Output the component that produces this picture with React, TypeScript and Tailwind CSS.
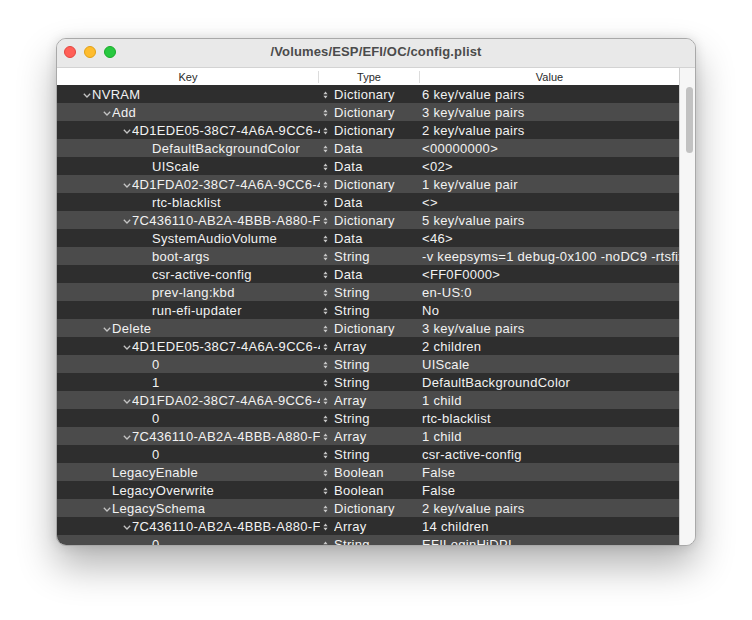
import React from 'react';

interface Row {
  key: string;
  level: number;
  open?: boolean;
  type: string;
  value: string;
}

const rows: Row[] = [
  { key: 'NVRAM', level: 0, open: true, type: 'Dictionary', value: '6 key/value pairs' },
  { key: 'Add', level: 1, open: true, type: 'Dictionary', value: '3 key/value pairs' },
  { key: '4D1EDE05-38C7-4A6A-9CC6-4BCCA8B38C14', level: 2, open: true, type: 'Dictionary', value: '2 key/value pairs' },
  { key: 'DefaultBackgroundColor', level: 3, type: 'Data', value: '<00000000>' },
  { key: 'UIScale', level: 3, type: 'Data', value: '<02>' },
  { key: '4D1FDA02-38C7-4A6A-9CC6-4BCCA8B30102', level: 2, open: true, type: 'Dictionary', value: '1 key/value pair' },
  { key: 'rtc-blacklist', level: 3, type: 'Data', value: '<>' },
  { key: '7C436110-AB2A-4BBB-A880-FE41995C9F82', level: 2, open: true, type: 'Dictionary', value: '5 key/value pairs' },
  { key: 'SystemAudioVolume', level: 3, type: 'Data', value: '<46>' },
  { key: 'boot-args', level: 3, type: 'String', value: '-v keepsyms=1 debug-0x100 -noDC9 -rtsfix alcid=1' },
  { key: 'csr-active-config', level: 3, type: 'Data', value: '<FF0F0000>' },
  { key: 'prev-lang:kbd', level: 3, type: 'String', value: 'en-US:0' },
  { key: 'run-efi-updater', level: 3, type: 'String', value: 'No' },
  { key: 'Delete', level: 1, open: true, type: 'Dictionary', value: '3 key/value pairs' },
  { key: '4D1EDE05-38C7-4A6A-9CC6-4BCCA8B38C14', level: 2, open: true, type: 'Array', value: '2 children' },
  { key: '0', level: 3, type: 'String', value: 'UIScale' },
  { key: '1', level: 3, type: 'String', value: 'DefaultBackgroundColor' },
  { key: '4D1FDA02-38C7-4A6A-9CC6-4BCCA8B30102', level: 2, open: true, type: 'Array', value: '1 child' },
  { key: '0', level: 3, type: 'String', value: 'rtc-blacklist' },
  { key: '7C436110-AB2A-4BBB-A880-FE41995C9F82', level: 2, open: true, type: 'Array', value: '1 child' },
  { key: '0', level: 3, type: 'String', value: 'csr-active-config' },
  { key: 'LegacyEnable', level: 1, type: 'Boolean', value: 'False' },
  { key: 'LegacyOverwrite', level: 1, type: 'Boolean', value: 'False' },
  { key: 'LegacySchema', level: 1, open: true, type: 'Dictionary', value: '2 key/value pairs' },
  { key: '7C436110-AB2A-4BBB-A880-FE41995C9F82', level: 2, open: true, type: 'Array', value: '14 children' },
  { key: '0', level: 3, type: 'String', value: 'EFILoginHiDPI' },
];

const indent = ['pl-[26px]', 'pl-[46px]', 'pl-[66px]', 'pl-[86px]'];

function Chevron() {
  return (
    <svg width="8" height="5" viewBox="0 0 8 5" className="shrink-0 mr-[1px]">
      <path d="M0.8 0.8 L4 4 L7.2 0.8" fill="none" stroke="#c4c4c4" strokeWidth="1.3" />
    </svg>
  );
}

function Stepper() {
  return (
    <svg width="5" height="8" viewBox="0 0 5 8" className="shrink-0">
      <path d="M2.5 0.5 L4.6 3.2 L0.4 3.2 Z" fill="#c9c9c9" />
      <path d="M2.5 7.5 L4.6 4.8 L0.4 4.8 Z" fill="#c9c9c9" />
    </svg>
  );
}

export default function App() {
  return (
    <div
      className="w-[752px] h-[620px] bg-white pt-[38px] px-[56px]"
      style={{ fontFamily: '"Liberation Sans", Arial, sans-serif' }}
    >
      <div className="h-[508px] rounded-[10px] overflow-hidden border border-[#a9a9a9] bg-[#ececec] flex flex-col shadow-[0_20px_38px_rgba(0,0,0,0.3),0_0_12px_rgba(0,0,0,0.12)]">
        {/* Title bar */}
        <div className="h-[29px] shrink-0 grid grid-cols-[1fr_auto_1fr] items-center bg-[#e9e9e9] border-b border-[#d3d3d3] pb-[2px]">
          <div className="flex items-center gap-[8px] pl-[7px]">
            <span className="w-[12px] h-[12px] rounded-full bg-[#ff5f57] border border-[#e2463f]" />
            <span className="w-[12px] h-[12px] rounded-full bg-[#febc2e] border border-[#e1a116]" />
            <span className="w-[12px] h-[12px] rounded-full bg-[#28c840] border border-[#1aab29]" />
          </div>
          <div className="text-[13px] font-bold text-[#4b4b4b] tracking-[0.15px]">/Volumes/ESP/EFI/OC/config.plist</div>
          <div />
        </div>

        {/* Body */}
        <div className="flex flex-1 min-h-0">
          <div className="w-[622px] shrink-0 flex flex-col min-h-0">
            {/* Header */}
            <div className="h-[17px] shrink-0 bg-white grid grid-cols-[261px_101px_1fr] items-center text-[11px] text-[#2a2a2a] pl-[1px]">
              <div className="text-center border-r border-[#dcdcdc] h-[12px] leading-[12px]">Key</div>
              <div className="text-center border-r border-[#dcdcdc] h-[12px] leading-[12px]">Type</div>
              <div className="text-center h-[12px] leading-[12px]">Value</div>
            </div>

            {/* Rows */}
            <div className="flex-1 overflow-hidden">
              {rows.map((r, i) => (
                <div
                  key={i}
                  className={`h-[18px] pt-[2px] grid grid-cols-[263px_98px_1fr] items-center text-[13px] leading-[16px] tracking-[0.3px] text-[#f2f2f2] ${
                    i % 2 === 0 ? 'bg-[#2e2e2e]' : 'bg-[#4b4b4b]'
                  }`}
                >
                  <div className={`flex items-center min-w-0 overflow-hidden whitespace-nowrap ${indent[r.level]}`}>
                    {r.open ? <Chevron /> : <span className="w-[9px] shrink-0" />}
                    <span className="min-w-0 overflow-hidden whitespace-nowrap">{r.key}</span>
                  </div>
                  <div className="flex items-center gap-[6px] pl-[3px] min-w-0 whitespace-nowrap overflow-hidden">
                    <Stepper />
                    <span className="min-w-0 overflow-hidden">{r.type}</span>
                  </div>
                  <div className="pl-[4px] min-w-0 whitespace-nowrap overflow-hidden">{r.value}</div>
                </div>
              ))}
            </div>
          </div>

          {/* Scrollbar */}
          <div className="w-[16px] shrink-0 bg-[#f6f6f6] border-l border-[#cfcfcf] pt-[19px] pl-[6px]">
            <div className="w-[7px] h-[66px] rounded-full bg-[#c2c2c2]" />
          </div>
        </div>
      </div>
    </div>
  );
}
